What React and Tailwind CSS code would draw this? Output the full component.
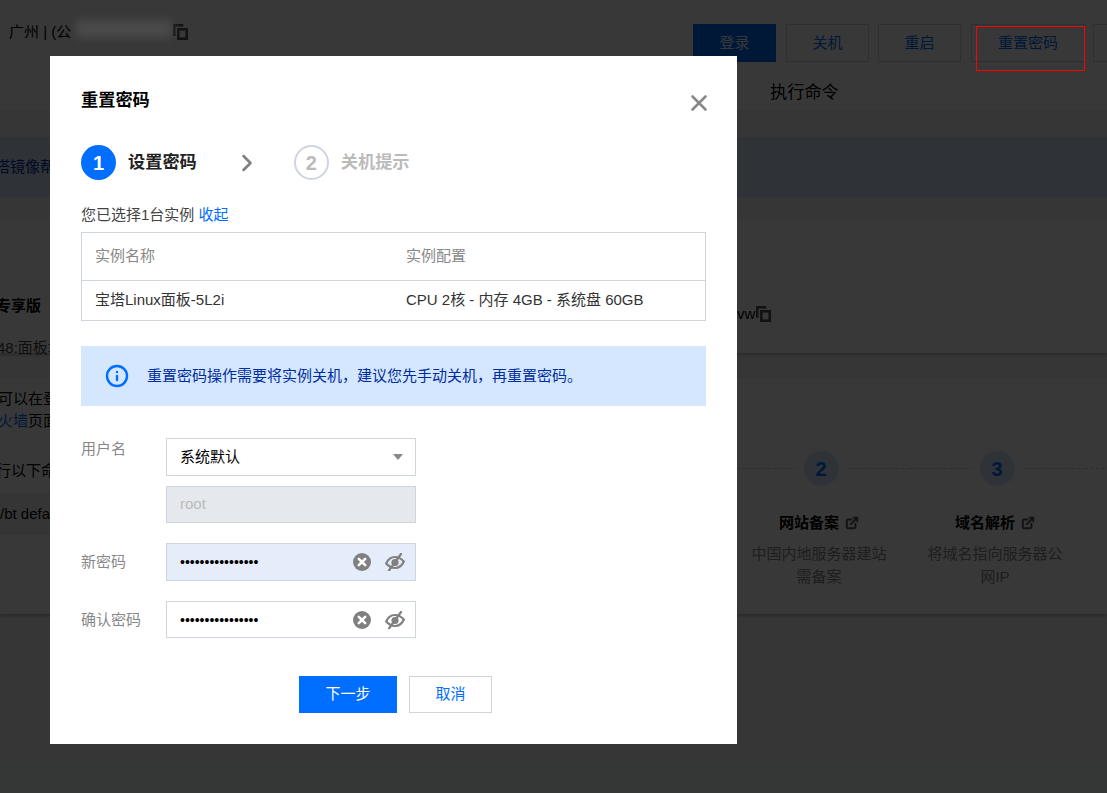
import React from 'react';
import { X, ChevronRight, Info, ExternalLink } from 'lucide-react';

const FONT = '[font-family:"Liberation_Sans","Noto_Sans_CJK_SC",sans-serif]';

function CopyIcon() {
  return (
    <svg width="15" height="16" viewBox="0 0 15 16" fill="none" stroke="#555" strokeWidth="2.6" className="shrink-0">
      <path d="M1.3 12V1.3h9" />
      <rect x="5.3" y="5.3" width="8.4" height="9.4" />
    </svg>
  );
}

function ClearIcon() {
  return (
    <svg width="18" height="18" viewBox="0 0 18 18" className="shrink-0">
      <circle cx="9" cy="9" r="9" fill="#808080" />
      <path d="M5.8 5.8l6.4 6.4M12.2 5.8l-6.4 6.4" stroke="#fff" strokeWidth="2.6" strokeLinecap="round" />
    </svg>
  );
}

function EyeOffIcon() {
  return (
    <svg width="20" height="18" viewBox="0 0 20 18" fill="none" className="shrink-0">
      <path d="M1.2 10.5C3 6.2 6.2 4 10 4c3.2 0 6 1.4 8.8 4.5C17 12.8 13.8 15 10 15c-3.2 0-6-1.4-8.8-4.5z" stroke="#808080" strokeWidth="2.2" />
      <circle cx="10" cy="9.5" r="3.6" fill="#808080" />
      <path d="M16 1L4 17.5" stroke="#808080" strokeWidth="2.2" strokeLinecap="round" />
    </svg>
  );
}

function TopButton({ children, primary, className = '' }) {
  return (
    <button
      className={`h-[38px] shrink-0 border text-[15px] ${primary ? 'border-[#006eff] bg-[#006eff] text-[#fff]' : 'border-[#cfd5de] bg-white text-[#006eff]'} ${className}`}
    >
      {children}
    </button>
  );
}

function GuideStep({ num, title, desc }) {
  return (
    <div className="flex w-[176px] shrink-0 flex-col items-center">
      <div className="flex w-full items-center gap-2">
        <div className="flex-1 border-t border-dashed border-[#cfd5de]" />
        <div className="flex size-[35px] items-center justify-center rounded-full bg-[#d5e7ff] text-xl font-bold text-[#006eff]">{num}</div>
        <div className="flex-1 border-t border-dashed border-[#cfd5de]" />
      </div>
      <div className="mt-[27px] mr-1 flex h-5 items-center gap-[6px] text-[15px] font-bold text-black">
        {title}
        <ExternalLink size={14} strokeWidth={3.2} className="text-[#555]" />
      </div>
      <div className="mt-[9px] mr-1 w-[140px] text-center text-[15px] leading-[23px] text-[#888]">{desc}</div>
    </div>
  );
}

function Background() {
  return (
    <div className="flex h-[793px] flex-col overflow-hidden bg-[#f3f4f7] text-black">
      <div className="h-[111px] shrink-0 border-b border-[#e5e8ed] bg-white">
        <div className="flex items-start justify-between pt-6 pl-[9px]">
          <div className="flex items-center gap-[1px] text-[15px] leading-[14px]">
            <span className="w-[163px] whitespace-nowrap">广州 | (公</span>
            <CopyIcon />
          </div>
          <div className="mr-[-62px] flex gap-[9px]">
            <TopButton primary className="w-[83px]">登录</TopButton>
            <TopButton className="ml-[1px] w-[83px]">关机</TopButton>
            <TopButton className="w-[83px]">重启</TopButton>
            <TopButton className="ml-[1px] w-[114px]">重置密码</TopButton>
            <TopButton className="ml-[-1px] w-[76px]" />
          </div>
        </div>
        <div className="mt-[18px] pl-[770px] text-[17.2px] leading-6">执行命令</div>
      </div>

      <div className="mt-[26px] flex h-[60px] shrink-0 items-center bg-[#d5e7ff] text-[15px] whitespace-nowrap text-[#002da0]">
        <span className="ml-[-20px]">宝塔镜像帮助文档</span>
      </div>

      <div className="mt-[22px] h-[134px] shrink-0 bg-white shadow-[0_2px_3px_rgba(54,58,80,0.3)]">
        <div className="flex h-full">
          <div className="w-[737px] shrink-0 text-[15px] whitespace-nowrap">
            <div className="mt-[77px] ml-[-34px] leading-5 font-bold">宝塔专享版</div>
            <div className="mt-[22px] ml-[-3px] leading-5 text-[#444]">48:面板地址</div>
          </div>
          <div className="mt-[87px] flex h-4 items-center gap-[1px] text-[15px]">
            <span>vw</span>
            <CopyIcon />
          </div>
        </div>
      </div>

      <div className="mt-[25px] h-[236px] shrink-0 bg-white shadow-[0_2px_3px_rgba(54,58,80,0.3)]">
        <div className="flex h-full">
          <div className="w-[733px] shrink-0 text-[15px] whitespace-nowrap">
            <div className="mt-[10px] ml-[-17px] leading-[22px]">
              <div>您可以在登录</div>
              <div><span className="text-[#006eff]">防火墙</span>页面</div>
            </div>
            <div className="mt-[29px] ml-[-19px] leading-5">执行以下命令</div>
            <div className="mt-[12px] flex h-[42px] items-center bg-[#f2f2f2] pl-0">/bt default</div>
          </div>
          <div className="mt-[73px] flex items-start">
            <GuideStep num="2" title="网站备案" desc="中国内地服务器建站需备案" />
            <GuideStep num="3" title="域名解析" desc="将域名指向服务器公网IP" />
            <div className="mt-[17px] w-[30px] border-t border-dashed border-[#cfd5de]" />
          </div>
        </div>
      </div>
    </div>
  );
}

function Label({ children }) {
  return <div className="w-[85px] shrink-0 text-[15px] leading-[22px] text-[#888]">{children}</div>;
}

function PasswordField({ label, filled, className = '' }) {
  return (
    <div className={`flex items-center ${className}`}>
      <Label>{label}</Label>
      <div className={`flex w-[250px] items-center border border-[#cfd5de] pr-[10px] pl-[13px] ${filled ? 'h-[38px] bg-[#e5edfb]' : 'h-[37px] bg-white'}`}>
        <input
          type="password"
          readOnly
          defaultValue="aaaaaaaaaaaaaaaa"
          className="w-[160px] min-w-0 flex-1 bg-transparent text-sm text-black outline-none"
        />
        <div className="flex items-center gap-[14px]">
          <ClearIcon />
          <EyeOffIcon />
        </div>
      </div>
    </div>
  );
}

function Modal() {
  return (
    <div className="mt-14 ml-[50px] flex h-[688px] w-[687px] flex-col bg-white px-[31px] text-black">
      <div className="mt-[34px] flex items-center justify-between text-[17.2px] leading-5 font-bold">
        <span>重置密码</span>
        <X size={26} strokeWidth={2.4} className="mr-[-6px] mb-[-6px] text-[#888]" />
      </div>

      <div className="mt-[35px] flex items-center">
        <div className="flex size-[35px] items-center justify-center rounded-full bg-[#006eff] text-xl font-bold text-white">1</div>
        <span className="ml-3 text-[17.2px] font-bold text-[#222]">设置密码</span>
        <ChevronRight size={28} strokeWidth={2.2} className="ml-9 text-[#808080]" />
        <div className="ml-[33px] flex size-[35px] items-center justify-center rounded-full border-2 border-[#cfd5de] text-xl font-bold text-[#bbb]">2</div>
        <span className="ml-3 text-[17.2px] font-bold text-[#bbb]">关机提示</span>
      </div>

      <div className="mt-[25px] text-[15px] leading-5 text-[#444]">
        您已选择1台实例 <span className="text-[#006eff]">收起</span>
      </div>

      <div className="mt-[7px] h-[89px] w-[625px] border border-[#cfd5de] text-[15px]">
        <div className="flex h-[48px] items-center border-b border-[#cfd5de] text-[#888]">
          <div className="w-[324px] pl-[13px]">实例名称</div>
          <div>实例配置</div>
        </div>
        <div className="flex h-[39px] items-center text-[#333]">
          <div className="w-[324px] pl-[13px]">宝塔Linux面板-5L2i</div>
          <div>CPU 2核 - 内存 4GB - 系统盘 60GB</div>
        </div>
      </div>

      <div className="mt-[25px] flex h-[60px] w-[625px] items-center bg-[#d5e7ff] pl-6 text-[15px] text-[#002da0]">
        <Info size={24} strokeWidth={2.4} className="text-[#006eff]" />
        <span className="ml-[18px]">重置密码操作需要将实例关机，建议您先手动关机，再重置密码。</span>
      </div>

      <div className="mt-8 flex items-start">
        <Label>用户名</Label>
        <div className="flex w-[250px] flex-col gap-[10px]">
          <div className="flex h-[38px] items-center justify-between border border-[#cfd5de] pr-[12px] pl-[13px] text-[15px]">
            系统默认
            <span className="h-0 w-0 border-x-[5px] border-t-[6px] border-x-transparent border-t-[#888]" />
          </div>
          <div className="flex h-[37px] items-center border border-[#cfd5de] bg-[#e5e8ed] pl-[13px] text-[15px] text-[#bbb]">root</div>
        </div>
      </div>

      <PasswordField label="新密码" filled className="mt-5" />
      <PasswordField label="确认密码" className="mt-5" />

      <div className="mt-[38px] flex justify-center gap-3 pl-1 text-[15px]">
        <button className="h-[37px] w-[98px] bg-[#006eff] text-white">下一步</button>
        <button className="h-[37px] w-[83px] border border-[#cfd5de] text-[#006eff]">取消</button>
      </div>
    </div>
  );
}

export default function App() {
  return (
    <div className={`relative h-[793px] overflow-hidden ${FONT}`}>
      <Background />
      <div className="absolute inset-0 bg-black/[0.78]">
        <Modal />
      </div>
      {/* annotation + masking drawn on top of the screenshot */}
      <div className="absolute top-[26px] left-[976px] h-[45px] w-[109px] border border-[#ff0000]" />
      <div className="absolute top-[20px] left-[76px] h-[18px] w-[96px] bg-[#4a4a4a] blur-[4px]" />
    </div>
  );
}
